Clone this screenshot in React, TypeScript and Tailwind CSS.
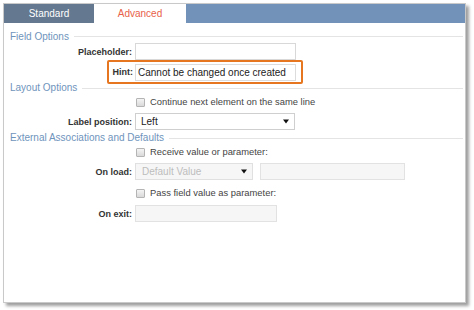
import React from "react";

const font = { fontFamily: '"Liberation Sans", Arial, Helvetica, sans-serif' };

function Legend({ text, h }: { text: string; h: string }) {
  return (
    <div className={`flex items-center pl-[6px] pr-[2px] ${h}`}>
      <span className="text-[10px] leading-[12px] text-[#6f94bc] whitespace-nowrap">{text}</span>
      <div className="ml-[5px] h-px flex-1 bg-[#e4e4e4]" />
    </div>
  );
}

function Label({ text }: { text: string }) {
  return (
    <div className="w-[129px] shrink-0 pr-[1px] text-right text-[9px] font-bold leading-[12px] text-[#333]">
      {text}
    </div>
  );
}

function Checkbox() {
  return (
    <span className="inline-block h-[9px] w-[9px] shrink-0 rounded-[1px] border border-[#b4b4b4] bg-gradient-to-b from-[#f4f4f4] to-[#d9d9d9]" />
  );
}

function Arrow() {
  return (
    <svg width="6" height="5" viewBox="0 0 6 5" className="shrink-0">
      <path d="M0 0.5 L6 0.5 L3 4.5 Z" fill="#111" />
    </svg>
  );
}

export default function App() {
  return (
    <div className="h-[310px] w-[474px] overflow-hidden bg-white pl-[3px] pt-[3px]" style={font}>
      <div className="flex h-[300px] w-[463px] flex-col border border-[#c9c9c9] bg-white shadow-[3px_3px_3px_rgba(0,0,0,0.38)]">
        {/* tabs */}
        <div className="flex h-[19px] shrink-0">
          <div className="flex w-[90px] items-center justify-center bg-[#64798f] text-[10px] text-white">
            Standard
          </div>
          <div className="flex w-[92px] items-center justify-center bg-white text-[10px] text-[#e8614a]">
            Advanced
          </div>
          <div className="flex-1 bg-[#7292ba]" />
        </div>

        <div className="h-[7px]" />
        <Legend text="Field Options" h="h-[13px]" />

        <div className="flex h-[17px] items-center">
          <Label text="Placeholder:" />
          <div className="ml-[2px] h-[17px] w-[161px] border border-[#d8d8d8] bg-white" />
        </div>

        <div className="flex h-[24px] items-center">
          <div className="ml-[103px] flex h-[24px] w-[196px] items-center rounded-[2px] border-2 border-[#e6761f]">
            <div className="w-[24px] text-right text-[9px] font-bold leading-[12px] text-[#333]">Hint:</div>
            <div className="ml-[2px] flex h-[17px] w-[161px] items-center border border-[#dcdcdc] bg-white pl-[2px] text-[10px] text-[#222] whitespace-nowrap">
              Cannot be changed once created
            </div>
          </div>
        </div>

        <Legend text="Layout Options" h="h-[8px]" />

        <div className="flex h-[21px] items-center pl-[132px]">
          <Checkbox />
          <span className="ml-[5px] text-[9.4px] text-[#444] whitespace-nowrap">
            Continue next element on the same line
          </span>
        </div>

        <div className="flex h-[17px] items-center">
          <Label text="Label position:" />
          <div className="ml-[2px] flex h-[17px] w-[160px] items-center justify-between border border-[#cfcfcf] bg-white pl-[5px] pr-[5px] text-[10px] text-[#222]">
            <span>Left</span>
            <Arrow />
          </div>
        </div>

        <Legend text="External Associations and Defaults" h="h-[16px]" />

        <div className="flex h-[12px] items-center pl-[132px]">
          <Checkbox />
          <span className="ml-[5px] text-[9.4px] text-[#444] whitespace-nowrap">Receive value or parameter:</span>
        </div>

        <div className="flex h-[27px] items-center">
          <Label text="On load:" />
          <div className="ml-[2px] flex h-[17px] w-[118px] items-center justify-between border border-[#e0e0e0] bg-[#f6f6f6] pl-[6px] pr-[5px] text-[10px] text-[#bdbdbd]">
            <span className="whitespace-nowrap">Default Value</span>
            <Arrow />
          </div>
          <div className="ml-[7px] h-[17px] w-[145px] border border-[#e2e2e2] bg-[#f6f6f6]" />
        </div>

        <div className="flex h-[17px] items-center pl-[132px]">
          <Checkbox />
          <span className="ml-[5px] text-[9.4px] text-[#444] whitespace-nowrap">Pass field value as parameter:</span>
        </div>

        <div className="flex h-[23px] items-center">
          <Label text="On exit:" />
          <div className="ml-[2px] h-[17px] w-[142px] border border-[#e2e2e2] bg-[#f6f6f6]" />
        </div>
      </div>
    </div>
  );
}
